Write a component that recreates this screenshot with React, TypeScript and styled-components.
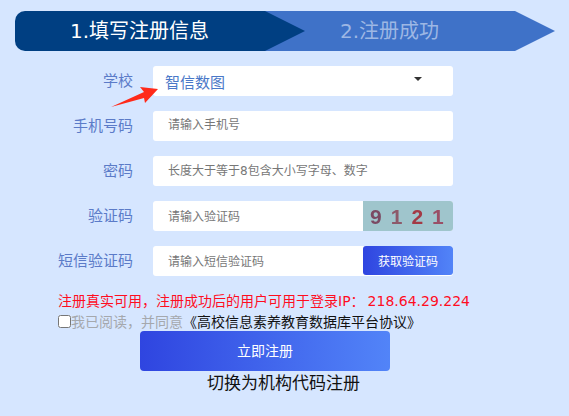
import React from "react";
import styled, { createGlobalStyle } from "styled-components";

const GlobalStyle = createGlobalStyle`
  html, body {
    margin: 0;
    padding: 0;
    background: #d6e6ff;
    font-family: "DejaVu Sans", "Noto Sans CJK SC", sans-serif;
  }
`;

const Page = styled.div`
  position: relative;
  width: 569px;
  height: 416px;
  overflow: hidden;
  padding-top: 11px;
  box-sizing: border-box;
`;

const Steps = styled.div`
  display: flex;
  margin-left: 15px;
  width: 540px;
  height: 40px;
`;

const StepOne = styled.div`
  flex: 0 0 290px;
  height: 40px;
  background: #003f82;
  border-radius: 10px 0 0 10px;
  clip-path: polygon(0 0, 250px 0, 100% 50%, 250px 100%, 0 100%);
  color: #fff;
  font-size: 20px;
  line-height: 40px;
  padding-left: 55px;
  box-sizing: border-box;
  position: relative;
  z-index: 1;
`;

const StepTwo = styled.div`
  flex: 0 0 290px;
  margin-left: -40px;
  height: 40px;
  background: #3f72c8;
  clip-path: polygon(0 0, 250px 0, 100% 50%, 250px 100%, 0 100%);
  color: #9db7e4;
  font-size: 20px;
  line-height: 40px;
  padding-left: 75px;
  box-sizing: border-box;
`;

const Form = styled.div`
  display: flex;
  flex-direction: column;
  gap: 15px;
  margin-top: 15px;
`;

const Row = styled.div`
  display: flex;
  align-items: center;
  height: 30px;
`;

const Label = styled.label`
  width: 133px;
  margin-right: 20px;
  text-align: right;
  color: #5b7bc8;
  font-size: 15px;
  line-height: 30px;
`;

const Field = styled.div`
  display: flex;
  width: 300px;
  height: 30px;
  background: #fff;
  border-radius: 3px;
  overflow: hidden;
`;

const SelectBox = styled(Field)`
  align-items: center;
  justify-content: space-between;
  padding: 0 31px 0 12px;
  box-sizing: border-box;
  color: #4a78c8;
  font-size: 15px;
`;

const Caret = styled.span`
  width: 0;
  height: 0;
  border-left: 4px solid transparent;
  border-right: 4px solid transparent;
  border-top: 4px solid #333;
  margin-top: -4px;
`;

const Input = styled.input<{ $top?: number; $bottom?: number }>`
  flex: 1;
  min-width: 0;
  border: 0;
  outline: 0;
  padding: ${(p) => p.$top ?? 0}px 0 ${(p) => p.$bottom ?? 0}px 15px;
  font-family: inherit;
  font-size: 12px;
  background: transparent;

  &::placeholder {
    color: #777;
    opacity: 1;
  }
`;

const Captcha = styled.div`
  flex: 0 0 90px;
  display: flex;
  gap: 9px;
  background: #9fc5cc;
  font-family: "Liberation Sans", sans-serif;
  font-size: 21px;
  font-weight: 700;
  line-height: 32px;
  padding-left: 7px;
  box-sizing: border-box;
  overflow: hidden;
`;

const CaptchaDigit = styled.span<{ $color: string }>`
  color: ${(p) => p.$color};
  filter: blur(0.6px);
`;

const SmsButton = styled.button`
  flex: 0 0 90px;
  height: 29px;
  border: 0;
  border-radius: 3px;
  padding: 0;
  color: #fff;
  font-family: inherit;
  font-size: 12px;
  background: linear-gradient(90deg, #2f45e0, #5284f8);
`;

const Notice = styled.div`
  margin: 15px 0 0 58px;
  color: #ff0d1f;
  font-size: 14px;
  line-height: 20px;
  white-space: nowrap;
`;

const IpValue = styled.span`
  margin-left: 3px;
`;

const Agreement = styled.div`
  display: flex;
  align-items: center;
  margin-left: 58px;
  height: 20px;
  font-size: 14px;
  color: #a5a8ad;
  white-space: nowrap;
`;

const Check = styled.input`
  width: 13px;
  height: 13px;
  margin: 0;
`;

const AgreementLink = styled.span`
  color: #111;
`;

const SubmitButton = styled.button`
  display: block;
  width: 250px;
  height: 40px;
  margin: 0 0 0 140px;
  border: 0;
  border-radius: 4px;
  padding: 0 0 2px;
  color: #fff;
  font-family: inherit;
  font-size: 14px;
  background: linear-gradient(90deg, #2f45e0, #5284f8);
`;

const SwitchLink = styled.div`
  text-align: center;
  color: #111;
  font-size: 17px;
  line-height: 24px;
  margin-left: -2px;
`;

const Arrow = styled.svg`
  position: absolute;
  left: 108px;
  top: 84px;
  width: 52px;
  height: 26px;
`;

const digits = [
  { value: "9", color: "#7b4a63" },
  { value: "1", color: "#8d5a6a" },
  { value: "2", color: "#a33a45" },
  { value: "1", color: "#9a4f66" },
];

export default function App() {
  return (
    <Page>
      <GlobalStyle />
      <Steps>
        <StepOne>1.填写注册信息</StepOne>
        <StepTwo>2.注册成功</StepTwo>
      </Steps>
      <Form>
        <Row>
          <Label>学校</Label>
          <SelectBox>
            <span>智信数图</span>
            <Caret />
          </SelectBox>
        </Row>
        <Row>
          <Label>手机号码</Label>
          <Field>
            <Input $bottom={2} placeholder="请输入手机号" />
          </Field>
        </Row>
        <Row>
          <Label>密码</Label>
          <Field>
            <Input placeholder="长度大于等于8包含大小写字母、数字" />
          </Field>
        </Row>
        <Row>
          <Label>验证码</Label>
          <Field>
            <Input $top={2} placeholder="请输入验证码" />
            <Captcha>
              {digits.map((d, i) => (
                <CaptchaDigit key={i} $color={d.color}>
                  {d.value}
                </CaptchaDigit>
              ))}
            </Captcha>
          </Field>
        </Row>
        <Row>
          <Label>短信验证码</Label>
          <Field>
            <Input $top={2} placeholder="请输入短信验证码" />
            <SmsButton>获取验证码</SmsButton>
          </Field>
        </Row>
      </Form>
      <Notice>
        注册真实可用，注册成功后的用户可用于登录IP：<IpValue>218.64.29.224</IpValue>
      </Notice>
      <Agreement>
        <Check type="checkbox" />
        我已阅读，并同意
        <AgreementLink>《高校信息素养教育数据库平台协议》</AgreementLink>
      </Agreement>
      <SubmitButton>立即注册</SubmitButton>
      <SwitchLink>切换为机构代码注册</SwitchLink>
      <Arrow viewBox="0 0 52 26">
        <path d="M3 23 L36 8 L32 3 L50 5 L37 19 L36 14 Z" fill="#ff2a1a" />
      </Arrow>
    </Page>
  );
}
